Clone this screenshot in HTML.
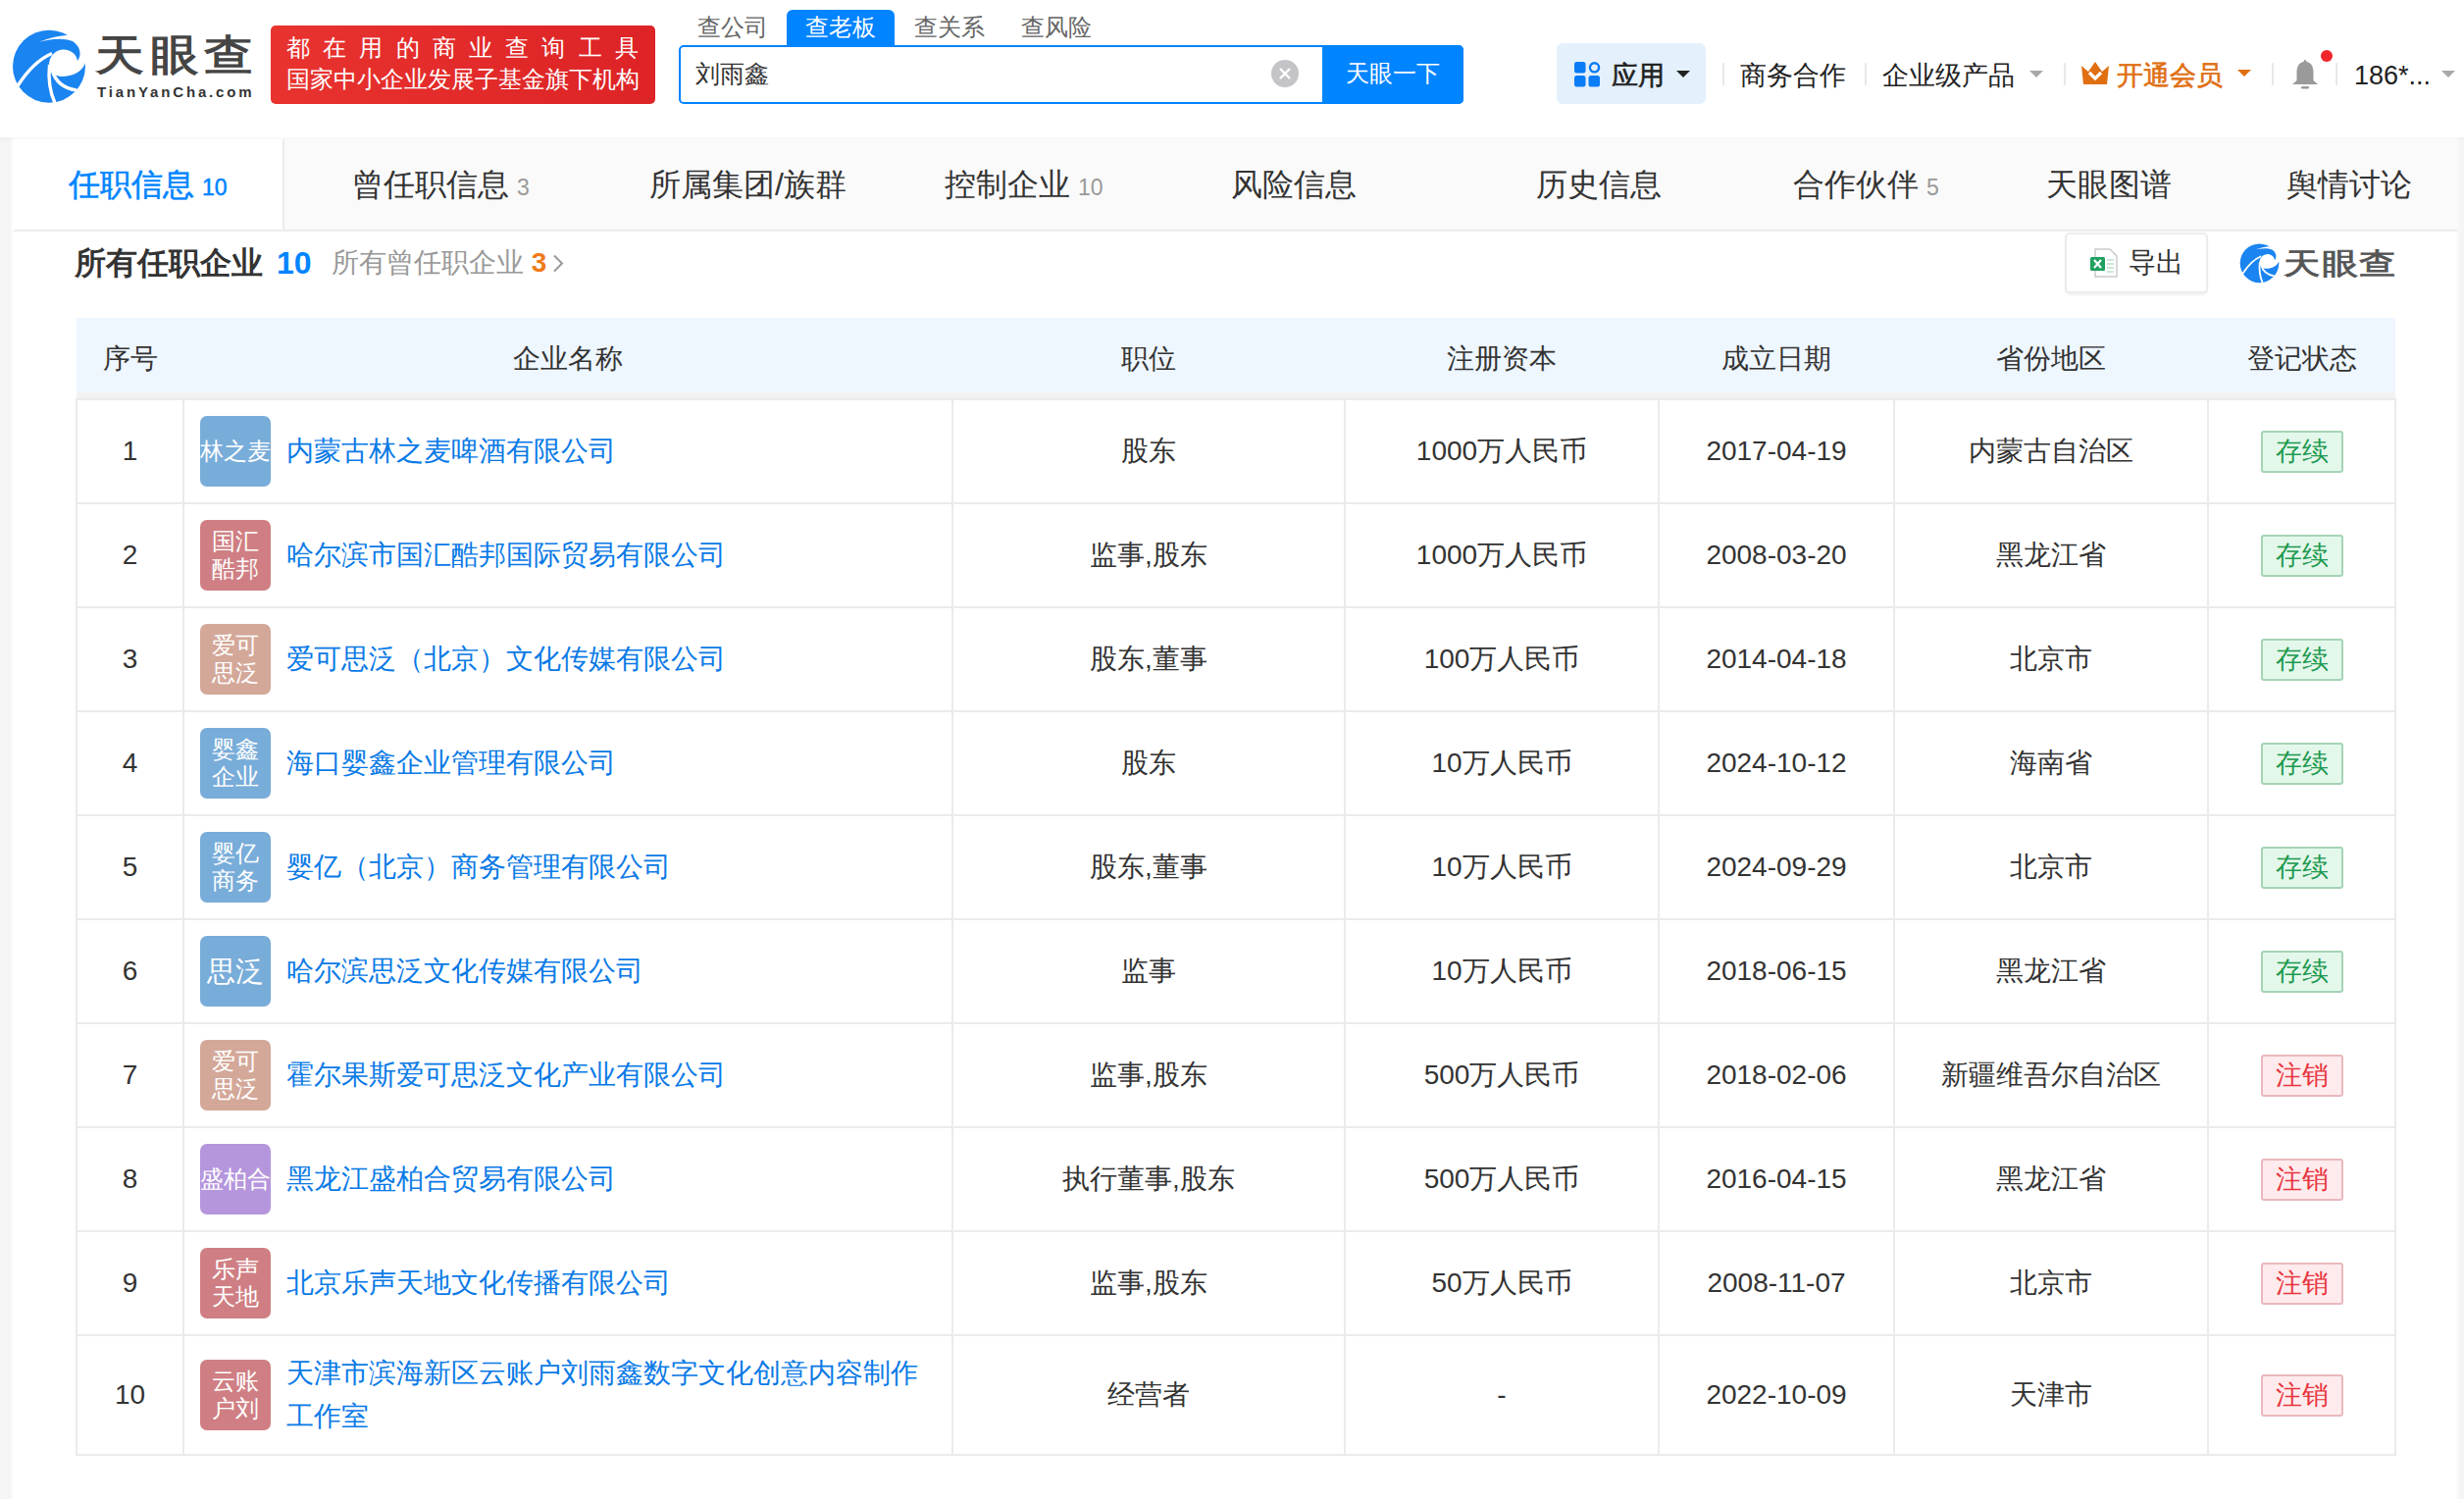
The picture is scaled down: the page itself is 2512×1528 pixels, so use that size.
<!DOCTYPE html>
<html><head><meta charset="utf-8">
<style>
*{margin:0;padding:0;box-sizing:border-box}
html,body{width:2512px;height:1528px;overflow:hidden;background:linear-gradient(90deg,#f5f5f5 10px,#fff 14px,#fff 2503px,#f5f5f5 2508px);font-family:"Liberation Sans",sans-serif;color:#333}
.abs{position:absolute}
#hdr{position:absolute;left:0;top:0;width:2512px;height:140px;background:#fff;box-shadow:0 2px 4px rgba(0,0,0,0.04)}
.tx{position:absolute;white-space:nowrap;line-height:1}
#panel{position:absolute;left:14px;top:142px;width:2491px;height:1386px}
#tabs{position:absolute;left:0;top:0;width:2491px;height:94px;background:#fafafa;border-bottom:2px solid #ececec}
.tab{position:absolute;top:0;height:92px;font-size:32px;line-height:92px;color:#333;white-space:nowrap}
.tab sup{font-size:23px;color:#999;vertical-align:baseline;margin-left:8px}
table{position:absolute;left:63px;top:182px;border-collapse:collapse;table-layout:fixed;font-size:28px;color:#333}
th{background:linear-gradient(#eef6fe 0,#eef6fe 76px,#f4f4f4 76px,#f1f1f1 82px,#e6e6e6 82px,#e6e6e6 84px);height:83px;padding:2px 0 0 0;font-weight:normal;text-align:center;border:0}
td{height:106px;border:2px solid #ebebeb;text-align:center;vertical-align:middle}
td.nm{text-align:left;padding-left:16px}
.lg{display:inline-block;width:72px;height:72px;border-radius:7px;color:#fff;font-size:24px;line-height:28px;text-align:center;vertical-align:middle;display:inline-flex;align-items:center;justify-content:center;white-space:normal;letter-spacing:0}
.lk{color:#0a7ae6;vertical-align:middle;margin-left:16px;display:inline-block}
.nmw{display:flex;align-items:center}
.st{display:inline-block;width:84px;height:43px;border-radius:3px;font-size:27px;line-height:39px}
.ok{color:#1f9a50;background:#e3f8eb;border:2px solid #a6d3b6}
.no{color:#e8353f;background:#ffebed;border:2px solid #e9b9bd}
</style></head><body>
<svg width="0" height="0" style="position:absolute"><defs><symbol id="tyc" viewBox="0 0 84 84">
<circle cx="42" cy="41.7" r="37" fill="#1a84f0"/>
<path d="M31,17 C44,12 56,9.5 64,10 L90,10 L90,38 L79,38 C76,47 66,52 55,52 C48,52 42,47 42,40 C42,32 48,25 56,24.5 C62,24 70,28 71,36 C75,31 75,22 66,16 C55,12 42,14 31,17 Z" fill="#fff"/>
<path d="M10,61.5 C20,46 32,34 45,28.5" stroke="#fff" stroke-width="3.4" fill="none"/>
<path d="M42.5,40 C41,55 43,68 48,79" stroke="#fff" stroke-width="3.4" fill="none"/>
<path d="M45,45 C48,56 56,64 70,66" stroke="#fff" stroke-width="3.4" fill="none"/>
</symbol></defs></svg>
<div id="hdr">
  <!-- logo -->
  <svg class="abs" style="left:8px;top:26px" width="84" height="84" viewBox="0 0 84 84"><use href="#tyc"/></svg>
  <div class="tx" style="left:97px;top:35px;font-size:50px;color:#444;-webkit-text-stroke:1.3px #444;letter-spacing:5.5px;transform:scaleY(0.86);transform-origin:0 0">天眼查</div>
  <div class="tx" style="left:99px;top:86px;font-size:15px;font-weight:bold;color:#333;letter-spacing:2.85px">TianYanCha.com</div>
  <div class="abs" style="left:276px;top:26px;width:392px;height:80px;border-radius:5px;background:linear-gradient(90deg,#e8332f,#dd2326)"></div>
  <div class="tx" style="left:292px;top:37px;font-size:24px;color:#fff;letter-spacing:13.2px">都在用的商业查询工具</div>
  <div class="tx" style="left:292px;top:69px;font-size:24px;color:#fff;letter-spacing:0px">国家中小企业发展子基金旗下机构</div>

  <!-- search tabs -->
  <div class="tx" style="left:711px;top:16px;font-size:24px;color:#666">查公司</div>
  <div class="abs" style="left:802px;top:10px;width:110px;height:38px;background:#0084ff;border-radius:6px 6px 0 0"></div>
  <div class="tx" style="left:821px;top:16px;font-size:24px;color:#fff">查老板</div>
  <div class="tx" style="left:932px;top:16px;font-size:24px;color:#666">查关系</div>
  <div class="tx" style="left:1041px;top:16px;font-size:24px;color:#666">查风险</div>
  <div class="abs" style="left:692px;top:46px;width:800px;height:60px;border:2px solid #0084ff;border-radius:5px;background:#fff"></div>
  <div class="abs" style="left:1348px;top:46px;width:144px;height:60px;background:#0084ff;border-radius:0 5px 5px 0"></div>
  <div class="tx" style="left:709px;top:63px;font-size:25px;color:#333">刘雨鑫</div>
  <div class="abs" style="left:1296px;top:61px;width:28px;height:28px;border-radius:50%;background:#c4c4c8"></div>
  <svg class="abs" style="left:1296px;top:61px" width="28" height="28"><path d="M9 9L19 19M19 9L9 19" stroke="#fff" stroke-width="2.4"/></svg>
  <div class="tx" style="left:1372px;top:63px;font-size:24px;color:#fff">天眼一下</div>

  <!-- right nav -->
  <div class="abs" style="left:1587px;top:44px;width:152px;height:62px;background:#e4f0fc;border-radius:6px"></div>
  <svg class="abs" style="left:1605px;top:63px" width="27" height="26" viewBox="0 0 27 26">
    <rect x="0" y="0" width="11.5" height="11.5" rx="2.5" fill="#0a7cf5"/>
    <circle cx="20.5" cy="5.8" r="4.6" fill="none" stroke="#0a7cf5" stroke-width="2.4"/>
    <rect x="0" y="14" width="11.5" height="11.5" rx="2.5" fill="#0a7cf5"/>
    <rect x="14.5" y="14" width="11.5" height="11.5" rx="2.5" fill="#0a7cf5"/>
  </svg>
  <div class="tx" style="left:1643px;top:64px;font-size:27px;color:#222;-webkit-text-stroke:0.6px #222">应用</div>
  <svg class="abs" style="left:1709px;top:72px" width="14" height="8"><path d="M0 0H14L7 7Z" fill="#222"/></svg>
  <div class="abs" style="left:1756px;top:64px;width:2px;height:23px;background:#e8e8e8"></div>
  <div class="tx" style="left:1774px;top:64px;font-size:27px;color:#222">商务合作</div>
  <div class="abs" style="left:1901px;top:64px;width:2px;height:23px;background:#e8e8e8"></div>
  <div class="tx" style="left:1919px;top:64px;font-size:27px;color:#222">企业级产品</div>
  <svg class="abs" style="left:2069px;top:72px" width="14" height="8"><path d="M0 0H14L7 7Z" fill="#a8a8a8"/></svg>
  <div class="abs" style="left:2104px;top:64px;width:2px;height:23px;background:#e8e8e8"></div>
  <svg class="abs" style="left:2121px;top:62px" width="30" height="24" viewBox="0 0 30 24">
    <path d="M1 5 L8 11 L15 1 L22 11 L29 5 L27 24 H3 Z" fill="#e06f12"/>
    <path d="M9 12 L15 18 L21 12" stroke="#fff" stroke-width="3.2" fill="none"/>
  </svg>
  <div class="tx" style="left:2158px;top:64px;font-size:27px;color:#e06f12;-webkit-text-stroke:0.6px #e06f12">开通会员</div>
  <svg class="abs" style="left:2281px;top:71px" width="14" height="8"><path d="M0 0H14L7 7Z" fill="#e06f12"/></svg>
  <div class="abs" style="left:2316px;top:64px;width:2px;height:23px;background:#e8e8e8"></div>
  <svg class="abs" style="left:2336px;top:60px" width="28" height="31" viewBox="0 0 28 31">
    <path d="M14 1 C15 1 15.5 2 15.5 3 C21 4 22.5 9 22.5 14 V22 L27 26 H1 L5.5 22 V14 C5.5 9 7 4 12.5 3 C12.5 2 13 1 14 1Z" fill="#9a9a9a"/>
    <rect x="10" y="28" width="8" height="2.5" rx="1.2" fill="#9a9a9a"/>
  </svg>
  <div class="abs" style="left:2366px;top:51px;width:12px;height:12px;border-radius:50%;background:#f0262b"></div>
  <div class="abs" style="left:2381px;top:64px;width:2px;height:23px;background:#e8e8e8"></div>
  <div class="tx" style="left:2400px;top:64px;font-size:27px;color:#222">186*...</div>
  <svg class="abs" style="left:2489px;top:72px" width="14" height="8"><path d="M0 0H14L7 7Z" fill="#a8a8a8"/></svg>
</div>

<div id="panel">
  <div id="tabs">
    <div class="abs" style="left:0;top:0;width:276px;height:92px;background:#fff;border-right:2px solid #ececec"></div>
    <div class="tab" style="left:56px;color:#0084ff;-webkit-text-stroke:0.5px #0084ff">任职信息<sup style="color:#0084ff">10</sup></div>
    <div class="tab" style="left:345px">曾任职信息<sup>3</sup></div>
    <div class="tab" style="left:648px">所属集团/族群</div>
    <div class="tab" style="left:949px">控制企业<sup>10</sup></div>
    <div class="tab" style="left:1241px">风险信息</div>
    <div class="tab" style="left:1552px">历史信息</div>
    <div class="tab" style="left:1814px">合作伙伴<sup>5</sup></div>
    <div class="tab" style="left:2072px">天眼图谱</div>
    <div class="tab" style="left:2317px">舆情讨论</div>
  </div>
  <div class="tx" style="left:62px;top:110px;font-size:32px;font-weight:bold;color:#333">所有任职企业 <span style="color:#0084ff;margin-left:5px">10</span></div>
  <div class="tx" style="left:324px;top:112px;font-size:28px;color:#999">所有曾任职企业 <b style="color:#f07a1a">3</b></div>
  <svg class="abs" style="left:549px;top:117px" width="12" height="19" viewBox="0 0 12 19"><path d="M2 1.5 L10 9.5 L2 17.5" stroke="#999" stroke-width="2" fill="none"/></svg>
  <div class="abs" style="left:2091px;top:95px;width:146px;height:62px;border:2px solid #ececec;border-radius:5px;background:#fff;box-shadow:0 2px 2px rgba(0,0,0,0.05)"></div>
  <svg class="abs" style="left:2117px;top:111px" width="28" height="30" viewBox="0 0 28 30">
    <path d="M5 1 H20 L27 8 V29 H5 Z" fill="#fff" stroke="#ccc" stroke-width="1.5"/>
    <path d="M17 12H24M17 16H24M17 20H24M17 24H24" stroke="#9ad0b0" stroke-width="1.2"/>
    <rect x="0" y="9" width="15" height="14" rx="1.5" fill="#1fa15f"/>
    <path d="M4 12 L11 20 M11 12 L4 20" stroke="#fff" stroke-width="2.2"/>
  </svg>
  <div class="tx" style="left:2156px;top:112px;font-size:28px;color:#333">导出</div>
  <svg class="abs" style="left:2267px;top:104px" width="45" height="45" viewBox="0 0 84 84"><use href="#tyc"/></svg>
  <div class="tx" style="left:2314px;top:112px;font-size:37px;color:#555;-webkit-text-stroke:1px #555;letter-spacing:1.5px;transform:scaleY(0.8);transform-origin:0 0">天眼查</div>

  <table>
    <colgroup><col style="width:109px"><col style="width:784px"><col style="width:400px"><col style="width:320px"><col style="width:240px"><col style="width:320px"><col style="width:191px"></colgroup>
    <tr><th>序号</th><th>企业名称</th><th>职位</th><th>注册资本</th><th>成立日期</th><th>省份地区</th><th>登记状态</th></tr>
    <tr><td>1</td><td class="nm"><div class="nmw"><span class="lg" style="background:#78acd9">林之麦</span><span class="lk">内蒙古林之麦啤酒有限公司</span></div></td><td>股东</td><td>1000万人民币</td><td>2017-04-19</td><td>内蒙古自治区</td><td><span class="st ok">存续</span></td></tr>
    <tr><td>2</td><td class="nm"><div class="nmw"><span class="lg" style="background:#cf7f83">国汇<br>酷邦</span><span class="lk">哈尔滨市国汇酷邦国际贸易有限公司</span></div></td><td>监事,股东</td><td>1000万人民币</td><td>2008-03-20</td><td>黑龙江省</td><td><span class="st ok">存续</span></td></tr>
    <tr><td>3</td><td class="nm"><div class="nmw"><span class="lg" style="background:#d3a899">爱可<br>思泛</span><span class="lk">爱可思泛（北京）文化传媒有限公司</span></div></td><td>股东,董事</td><td>100万人民币</td><td>2014-04-18</td><td>北京市</td><td><span class="st ok">存续</span></td></tr>
    <tr><td>4</td><td class="nm"><div class="nmw"><span class="lg" style="background:#78acd9">婴鑫<br>企业</span><span class="lk">海口婴鑫企业管理有限公司</span></div></td><td>股东</td><td>10万人民币</td><td>2024-10-12</td><td>海南省</td><td><span class="st ok">存续</span></td></tr>
    <tr><td>5</td><td class="nm"><div class="nmw"><span class="lg" style="background:#78acd9">婴亿<br>商务</span><span class="lk">婴亿（北京）商务管理有限公司</span></div></td><td>股东,董事</td><td>10万人民币</td><td>2024-09-29</td><td>北京市</td><td><span class="st ok">存续</span></td></tr>
    <tr><td>6</td><td class="nm"><div class="nmw"><span class="lg" style="background:#78acd9;font-size:29px">思泛</span><span class="lk">哈尔滨思泛文化传媒有限公司</span></div></td><td>监事</td><td>10万人民币</td><td>2018-06-15</td><td>黑龙江省</td><td><span class="st ok">存续</span></td></tr>
    <tr><td>7</td><td class="nm"><div class="nmw"><span class="lg" style="background:#d3a899">爱可<br>思泛</span><span class="lk">霍尔果斯爱可思泛文化产业有限公司</span></div></td><td>监事,股东</td><td>500万人民币</td><td>2018-02-06</td><td>新疆维吾尔自治区</td><td><span class="st no">注销</span></td></tr>
    <tr><td>8</td><td class="nm"><div class="nmw"><span class="lg" style="background:#b596dc">盛柏合</span><span class="lk">黑龙江盛柏合贸易有限公司</span></div></td><td>执行董事,股东</td><td>500万人民币</td><td>2016-04-15</td><td>黑龙江省</td><td><span class="st no">注销</span></td></tr>
    <tr><td>9</td><td class="nm"><div class="nmw"><span class="lg" style="background:#cf7f83">乐声<br>天地</span><span class="lk">北京乐声天地文化传播有限公司</span></div></td><td>监事,股东</td><td>50万人民币</td><td>2008-11-07</td><td>北京市</td><td><span class="st no">注销</span></td></tr>
    <tr><td style="height:122px">10</td><td class="nm"><div class="nmw"><span class="lg" style="background:#cf7f83">云账<br>户刘</span><span class="lk" style="line-height:44px;white-space:nowrap">天津市滨海新区云账户刘雨鑫数字文化创意内容制作<br>工作室</span></div></td><td>经营者</td><td>-</td><td>2022-10-09</td><td>天津市</td><td><span class="st no">注销</span></td></tr>
  </table>
</div>
</body></html>
